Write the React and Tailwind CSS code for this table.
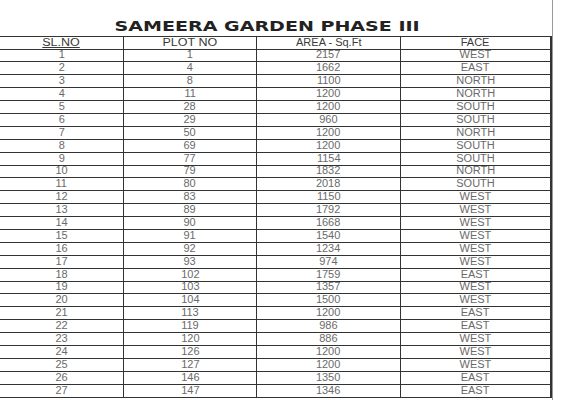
import React from "react";

const rows = [
  [1, 1, 2157, "WEST"],
  [2, 4, 1662, "EAST"],
  [3, 8, 1100, "NORTH"],
  [4, 11, 1200, "NORTH"],
  [5, 28, 1200, "SOUTH"],
  [6, 29, 960, "SOUTH"],
  [7, 50, 1200, "NORTH"],
  [8, 69, 1200, "SOUTH"],
  [9, 77, 1154, "SOUTH"],
  [10, 79, 1832, "NORTH"],
  [11, 80, 2018, "SOUTH"],
  [12, 83, 1150, "WEST"],
  [13, 89, 1792, "WEST"],
  [14, 90, 1668, "WEST"],
  [15, 91, 1540, "WEST"],
  [16, 92, 1234, "WEST"],
  [17, 93, 974, "WEST"],
  [18, 102, 1759, "EAST"],
  [19, 103, 1357, "WEST"],
  [20, 104, 1500, "WEST"],
  [21, 113, 1200, "EAST"],
  [22, 119, 986, "EAST"],
  [23, 120, 886, "WEST"],
  [24, 126, 1200, "WEST"],
  [25, 127, 1200, "WEST"],
  [26, 146, 1350, "EAST"],
  [27, 147, 1346, "EAST"],
];

const cols = "grid grid-cols-[124px_133px_144px_1fr]";

export default function App() {
  return (
    <div
      className="w-[566px] h-[400px] bg-white overflow-hidden"
      style={{ fontFamily: '"Liberation Sans", Arial, sans-serif' }}
    >
      <div className="w-[553px] h-full border-r border-[#999] flex flex-col">
        {/* title */}
        <div className="h-[36px] flex items-end justify-center pb-[3px] pr-[18px]">
          <h1
            className="text-[14px] leading-[14px] font-bold text-[#222] scale-x-[1.36] origin-center"
            style={{ fontFamily: '"DejaVu Sans", sans-serif' }}
          >
            SAMEERA GARDEN PHASE III
          </h1>
        </div>

        {/* table */}
        <div className="border-t border-r-2 border-[#333] flex flex-col leading-none">
          <div className={`${cols} h-[12.5px] border-b border-[#333] text-[10px] text-[#3a3a3a]`}>
            <div className="border-r border-[#333] flex items-center justify-center">
              <span className="underline scale-x-125">SL.NO</span>
            </div>
            <div className="border-r border-[#333] flex items-center justify-center">
              <span className="scale-x-125">PLOT NO</span>
            </div>
            <div className="border-r border-[#333] flex items-center justify-center">
              <span className="scale-x-110">AREA - Sq.Ft</span>
            </div>
            <div className="flex items-center justify-center">
              <span className="scale-x-110">FACE</span>
            </div>
          </div>
          {rows.map((r) => (
            <div
              key={r[0]}
              className={`${cols} h-[12.9px] border-b border-[#333] text-[10px] text-[#6a6a6a]`}
            >
              <div className="border-r border-[#333] flex items-center justify-center">
                <span className="scale-x-110">{r[0]}</span>
              </div>
              <div className="border-r border-[#333] flex items-center justify-center">
                <span className="scale-x-110">{r[1]}</span>
              </div>
              <div className="border-r border-[#333] flex items-center justify-center">
                <span className="scale-x-110">{r[2]}</span>
              </div>
              <div className="flex items-center justify-center">
                <span className="scale-x-110">{r[3]}</span>
              </div>
            </div>
          ))}
        </div>
      </div>
    </div>
  );
}
